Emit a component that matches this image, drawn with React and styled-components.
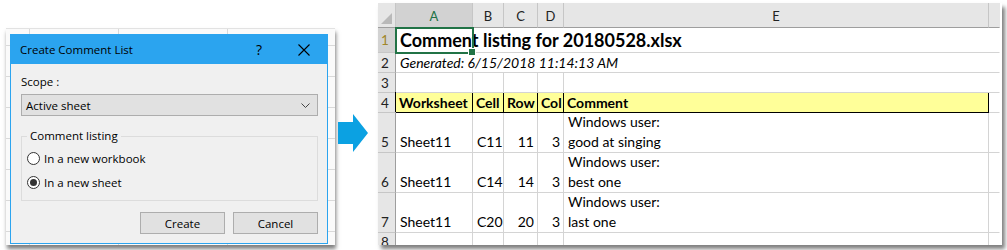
import React from "react";
import styled, { createGlobalStyle } from "styled-components";

const GlobalStyle = createGlobalStyle`
  html, body { margin: 0; padding: 0; background: #fff; }
  * { box-sizing: border-box; }
`;

const Page = styled.div`
  width: 1007px;
  height: 250px;
  display: flex;
  align-items: flex-start;
  overflow: hidden;
`;

/* ---------- left screenshot: the dialog ---------- */

const Shot = styled.div`
  margin: 28px 0 0 6px;
  width: 329px;
  height: 217px;
  padding: 5px 0 0 4px;
  background-color: #fafafa;
  background-image:
    linear-gradient(90deg, transparent 23px, #d9d9d9 23px, #d9d9d9 24px, transparent 24px),
    linear-gradient(90deg, transparent 112px, #d9d9d9 112px, #d9d9d9 113px, transparent 113px),
    linear-gradient(90deg, transparent 221px, #d9d9d9 221px, #d9d9d9 222px, transparent 222px),
    repeating-linear-gradient(180deg, transparent 0, transparent 16px, #d9d9d9 16px, #d9d9d9 17px, transparent 17px, transparent 31px);
  border-top: 1px solid #e2e2e2;
  box-shadow: 1px 4px 4px rgba(0, 0, 0, 0.5);
`;

const Dialog = styled.div`
  width: 318px;
  border: 1px solid #2ba4ef;
  background: #f0f0f0;
  font-family: "Open Sans", "Noto Sans", sans-serif;
  font-size: 11.5px;
  color: #000;
`;

const TitleBar = styled.div`
  height: 29px;
  display: flex;
  align-items: center;
  background: #2ba4ef;
  padding-left: 9px;
`;

const Title = styled.div`
  flex: 1;
  font-size: 11.5px;
`;

const TitleButton = styled.div`
  width: ${p => p.$w}px;
  height: 29px;
  display: flex;
  align-items: center;
  justify-content: center;
  font-size: 14px;
`;

const Body = styled.div`
  padding: 10px 9px 9px 10px;
`;

const Label = styled.div`
  line-height: 16px;
  margin-bottom: 4px;
`;

const Select = styled.div`
  height: 22px;
  display: flex;
  align-items: center;
  justify-content: space-between;
  padding: 0 7px 0 4px;
  background: #e1e1e1;
  border: 1px solid #adadad;
`;

const Group = styled.fieldset`
  margin: 12px 0 0;
  padding: 0 0 6px 5px;
  border: 1px solid #dcdcdc;
  min-width: 0;
`;

const Legend = styled.legend`
  padding: 0 3px;
  line-height: 16px;
`;

const RadioRow = styled.div`
  height: 24px;
  display: flex;
  align-items: center;
  gap: 4px;
  margin-top: ${p => (p.$first ? 2 : 0)}px;
`;

const RadioDot = styled.span`
  width: 13px;
  height: 13px;
  border-radius: 50%;
  border: 1px solid #333;
  background: #fff;
  display: flex;
  align-items: center;
  justify-content: center;
  &::after {
    content: "";
    width: 7px;
    height: 7px;
    border-radius: 50%;
    background: ${p => (p.$on ? "#333" : "transparent")};
  }
`;

const Buttons = styled.div`
  display: flex;
  justify-content: flex-end;
  gap: 8px;
  margin-top: 11px;
`;

const Button = styled.div`
  width: 85px;
  height: 22px;
  display: flex;
  align-items: center;
  justify-content: center;
  background: #e1e1e1;
  border: 1px solid #adadad;
`;

/* ---------- arrow ---------- */

const ArrowBox = styled.div`
  margin: 114px 0 0 3px;
  width: 31px;
  height: 38px;
`;

/* ---------- right screenshot: the sheet ---------- */

const Sheet = styled.div`
  margin: 3px 0 0 9px;
  width: 624px;
  height: 242px;
  overflow: hidden;
  background: #fff;
  box-shadow: 3px 4px 4px rgba(0, 0, 0, 0.5);
`;

const Grid = styled.div`
  display: grid;
  grid-template-columns: 18px 77px 31px 34px 26px 425px 11px;
  grid-template-rows: 25px 25px 20px 20px 20px 40px 40px 40px 20px;
  font-family: Lato, "Open Sans", sans-serif;
  font-size: 14px;
  color: #000;
`;

const Corner = styled.div`
  position: relative;
  background: #e6e6e6;
  border-right: 1px solid #c6c6c6;
  border-bottom: 1px solid #9e9e9e;
  &::after {
    content: "";
    position: absolute;
    right: 3px;
    bottom: 3px;
    border-left: 11px solid transparent;
    border-bottom: 11px solid #b9b9b9;
  }
`;

const ColHead = styled.div`
  display: flex;
  align-items: center;
  justify-content: center;
  background: ${p => (p.$sel ? "#d2d2d2" : "#e6e6e6")};
  color: ${p => (p.$sel ? "#217346" : "#222")};
  border-right: 1px solid ${p => (p.$last ? "transparent" : "#c6c6c6")};
  border-bottom: 1px solid #9e9e9e;
  font-size: 13px;
  padding-top: 1px;
`;

const RowHead = styled.div`
  display: flex;
  align-items: ${p => (p.$tall ? "flex-end" : "center")};
  padding-left: 3px;
  line-height: 20px;
  font-size: 13.5px;
  background: ${p => (p.$sel ? "#d2d2d2" : "#e6e6e6")};
  color: ${p => (p.$sel ? "#a0862a" : "#222")};
  border-right: 1px solid #9e9e9e;
  border-bottom: 1px solid #c6c6c6;
`;

const Cell = styled.div`
  position: relative;
  display: flex;
  align-items: ${p => (p.$tall ? "flex-end" : "center")};
  justify-content: ${p => (p.$right ? "flex-end" : "flex-start")};
  grid-column: ${p => (p.$span ? `span ${p.$span}` : "auto")};
  padding: 0 3px 0 4px;
  line-height: 20px;
  white-space: nowrap;
  border-right: 1px solid ${p => (p.$open ? "transparent" : "#d4d4d4")};
  border-bottom: 1px solid #d4d4d4;
`;

const HeadCell = styled.div`
  display: flex;
  align-items: center;
  padding: 0 3px 0 3px;
  font-weight: 700;
  background: #ffff99;
  border-right: 1px solid #000;
  border-bottom: 1px solid #000;
  box-shadow: 0 -1px 0 #000 ${p => (p.$first ? ", -1px -1px 0 #000" : "")};
`;

const Wrapped = styled.div`
  white-space: normal;
  line-height: 20px;
`;

const TitleText = styled.span`
  font-size: 18px;
  font-weight: 700;
`;

const SubText = styled.span`
  font-size: 14px;
  font-style: italic;
`;

const Selection = styled.div`
  position: absolute;
  left: -1px;
  top: -1px;
  width: 79px;
  height: 27px;
  border: 2px solid #217346;
  pointer-events: none;
  &::after {
    content: "";
    position: absolute;
    right: -4px;
    bottom: -4px;
    width: 6px;
    height: 6px;
    background: #217346;
    border: 1px solid #fff;
  }
`;

const rows = [
  { n: 5, cell: "C11", row: 11, first: "Windows user:", second: "good at singing" },
  { n: 6, cell: "C14", row: 14, first: "Windows user:", second: "best one" },
  { n: 7, cell: "C20", row: 20, first: "Windows user:", second: "last one" },
];

const headers = ["Worksheet", "Cell", "Row", "Col", "Comment"];

const App = () => {
  return (
    <Page>
      <GlobalStyle />
      <Shot>
        <Dialog>
          <TitleBar>
            <Title>Create Comment List</Title>
            <TitleButton $w={44}>?</TitleButton>
            <TitleButton $w={46}>
              <svg width="12" height="12" viewBox="0 0 12 12">
                <path d="M0.5 0.5 L11.5 11.5 M11.5 0.5 L0.5 11.5" stroke="#000" strokeWidth="1.1" />
              </svg>
            </TitleButton>
          </TitleBar>
          <Body>
            <Label>Scope :</Label>
            <Select>
              <span>Active sheet</span>
              <svg width="9" height="5" viewBox="0 0 9 5">
                <polyline points="0.5,0.5 4.5,4.5 8.5,0.5" fill="none" stroke="#444" strokeWidth="1" />
              </svg>
            </Select>
            <Group>
              <Legend>Comment listing</Legend>
              <RadioRow $first>
                <RadioDot />
                <span>In a new workbook</span>
              </RadioRow>
              <RadioRow>
                <RadioDot $on />
                <span>In a new sheet</span>
              </RadioRow>
            </Group>
            <Buttons>
              <Button>Create</Button>
              <Button>Cancel</Button>
            </Buttons>
          </Body>
        </Dialog>
      </Shot>

      <ArrowBox>
        <svg width="31" height="38" viewBox="0 0 31 38">
          <polygon points="0,8 15,8 15,0 30,19 15,38 15,30 0,30" fill="#0ba1e2" />
        </svg>
      </ArrowBox>

      <Sheet>
        <Grid>
          <Corner />
          <ColHead $sel>A</ColHead>
          <ColHead>B</ColHead>
          <ColHead>C</ColHead>
          <ColHead>D</ColHead>
          <ColHead>E</ColHead>
          <ColHead $last />

          <RowHead $sel>1</RowHead>
          <Cell $span={6} $open>
            <TitleText>Comment listing for 20180528.xlsx</TitleText>
            <Selection />
          </Cell>

          <RowHead>2</RowHead>
          <Cell $span={6} $open>
            <SubText>Generated: 6/15/2018 11:14:13 AM</SubText>
          </Cell>

          <RowHead>3</RowHead>
          <Cell />
          <Cell />
          <Cell />
          <Cell />
          <Cell $span={2} $open />

          <RowHead>4</RowHead>
          {headers.map((h, i) => (
            <HeadCell key={h} $first={i === 0}>{h}</HeadCell>
          ))}
          <Cell $open />

          {rows.map(r => (
            <React.Fragment key={r.n}>
              <RowHead $tall>{r.n}</RowHead>
              <Cell $tall>Sheet11</Cell>
              <Cell $tall>{r.cell}</Cell>
              <Cell $tall $right>{r.row}</Cell>
              <Cell $tall $right>3</Cell>
              <Cell $tall>
                <Wrapped>
                  {r.first}
                  <br />
                  {r.second}
                </Wrapped>
              </Cell>
              <Cell $tall $open />
            </React.Fragment>
          ))}

          <RowHead $tall>8</RowHead>
          <Cell />
          <Cell />
          <Cell />
          <Cell />
          <Cell />
          <Cell $open />
        </Grid>
      </Sheet>
    </Page>
  );
};

export default App;
